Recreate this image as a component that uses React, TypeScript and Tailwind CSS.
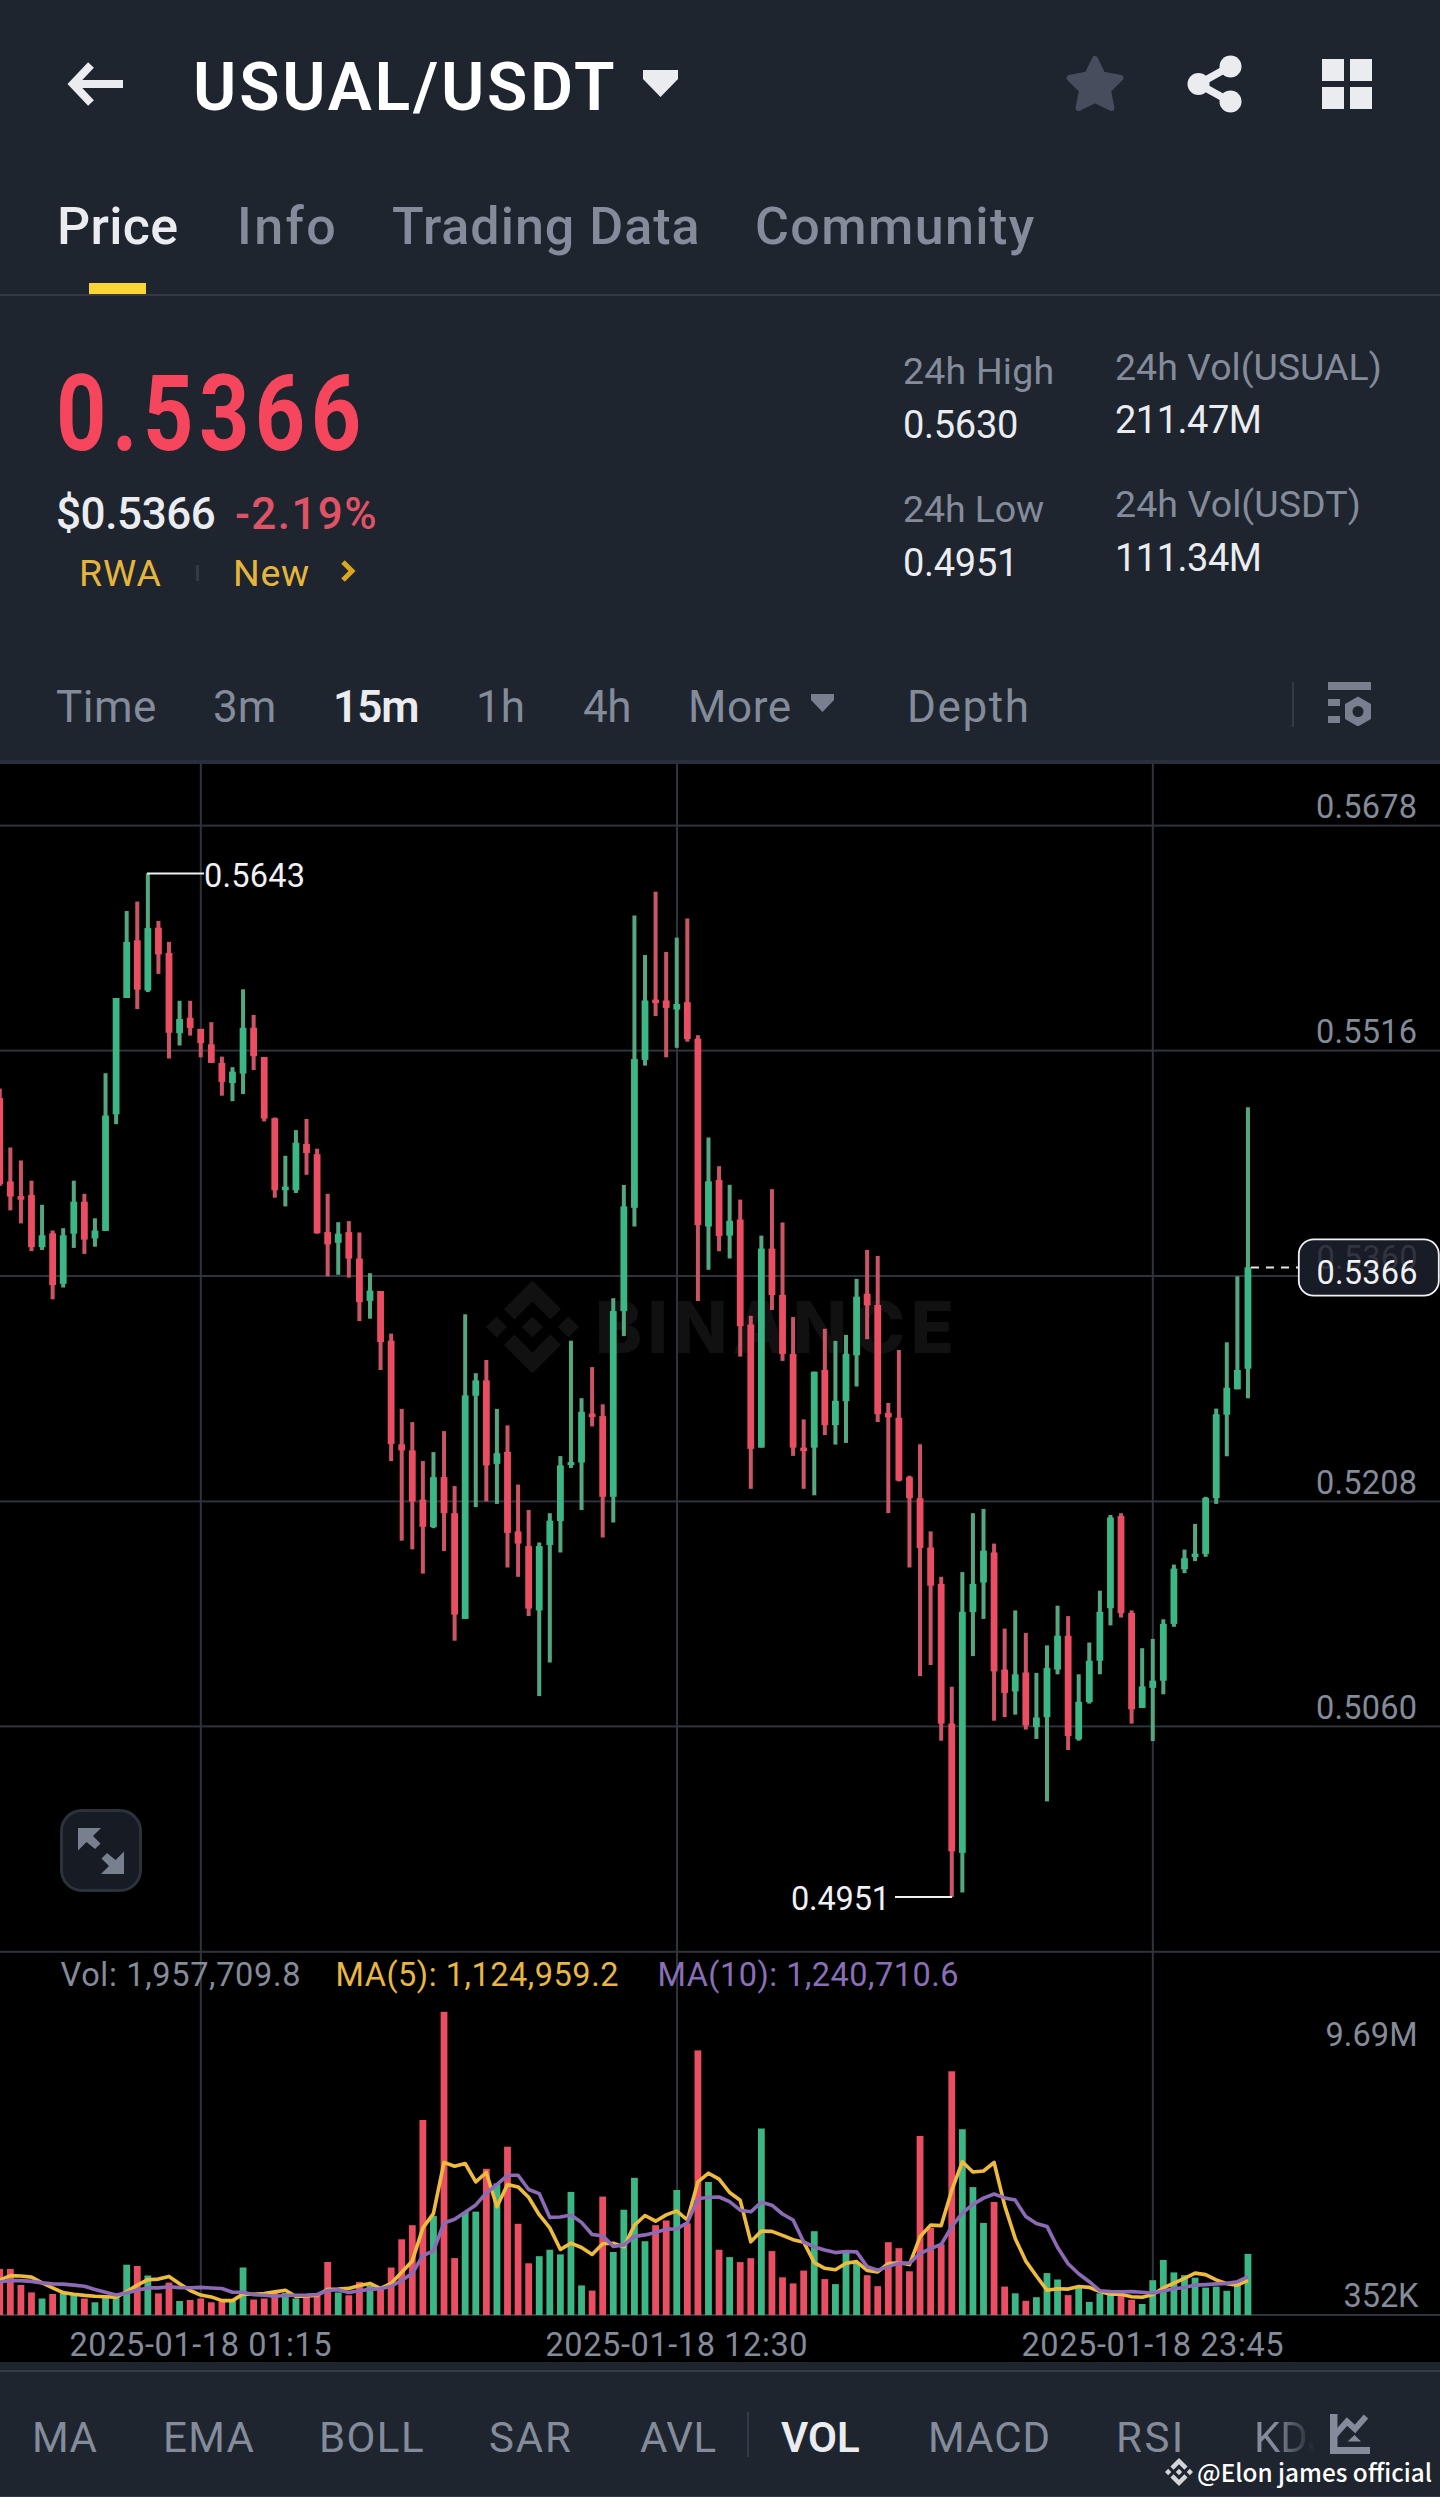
import { SiBinance } from 'react-icons/si';

const GREEN = '#3cb685';
const RED = '#ea4e63';
const GREEN_WICK = '#55a780';
const RED_WICK = '#cb5564';
const GRID = '#2e333c';
const LABEL = '#848b99';

// direction, wick top, body top, body bottom, wick bottom, volume bar height
type Candle = ['u' | 'd', number, number, number, number, number];

const candles: Candle[] = [
  ['d', 1088.6, 1098.1, 1184.3, 1185.9, 46],
  ['d', 1147.5, 1181.5, 1196.5, 1210.4, 46],
  ['d', 1160.5, 1196.1, 1199.7, 1223.4, 30],
  ['d', 1180.7, 1195, 1247.1, 1251.1, 22.6],
  ['u', 1204.8, 1235.3, 1247.1, 1249.9, 16.5],
  ['d', 1230.5, 1233.3, 1285.1, 1299.3, 21],
  ['u', 1228.2, 1235.3, 1283.9, 1287.5, 22],
  ['u', 1180.7, 1201.7, 1233.7, 1247.9, 22],
  ['d', 1193.8, 1201.7, 1239.6, 1253.9, 16.5],
  ['u', 1218.3, 1230.5, 1238.4, 1246.7, 12.7],
  ['u', 1073.2, 1115.5, 1230.9, 1230.9, 18.3],
  ['u', 998, 998, 1114.3, 1124.2, 19.3],
  ['u', 911, 941.9, 998, 998, 50.3],
  ['d', 901.6, 940.3, 989.7, 1009.1, 49],
  ['u', 873.5, 928.1, 990.5, 992.1, 39.5],
  ['d', 920.9, 927.7, 954.5, 973.9, 21.6],
  ['d', 941.9, 953, 1032.8, 1058.5, 32.4],
  ['u', 1000.8, 1019, 1033.2, 1045.5, 14],
  ['d', 1000.8, 1017.8, 1028.1, 1035.6, 15],
  ['d', 1028.9, 1028.9, 1043.1, 1057.3, 16.5],
  ['d', 1022.2, 1044.3, 1062.9, 1062.9, 12.7],
  ['d', 1056.6, 1062.9, 1081.9, 1095.7, 13.6],
  ['u', 1067.2, 1071.6, 1083, 1101.2, 14],
  ['u', 989.3, 1027.7, 1073.6, 1094.1, 47.5],
  ['d', 1015, 1027.7, 1056.2, 1070, 15.5],
  ['d', 1057, 1057, 1118.6, 1121.4, 16.5],
  ['d', 1117.5, 1118.2, 1190.2, 1197.7, 22],
  ['u', 1155.8, 1186.6, 1190.2, 1206.4, 22],
  ['u', 1130.1, 1142.8, 1190.2, 1193, 16.5],
  ['d', 1119, 1143.9, 1153, 1174.8, 18.3],
  ['d', 1148.7, 1154.2, 1233.3, 1233.7, 19.3],
  ['d', 1193.8, 1232.1, 1244.4, 1276.4, 53],
  ['u', 1222.2, 1233.7, 1242.8, 1274.8, 22.6],
  ['d', 1221.1, 1232.1, 1258.6, 1277.6, 19.7],
  ['d', 1232.5, 1258.6, 1302.1, 1321.1, 33],
  ['u', 1273.2, 1290.6, 1300.9, 1318.7, 29.6],
  ['d', 1291, 1291, 1342.1, 1370, 27.7],
  ['d', 1333.6, 1340.7, 1443.9, 1461.1, 47.5],
  ['d', 1408.9, 1444.3, 1450.4, 1540.7, 75.7],
  ['d', 1422.1, 1450.4, 1501.4, 1549.3, 89.8],
  ['d', 1461.1, 1499.6, 1526.8, 1573.6, 195],
  ['u', 1452.1, 1477.1, 1527.1, 1528.2, 99.2],
  ['d', 1431.1, 1477.1, 1513.2, 1551.1, 303.2],
  ['d', 1486.1, 1513.2, 1614.6, 1640.7, 56.9],
  ['u', 1314.3, 1395.4, 1618.9, 1618.9, 103],
  ['u', 1373.2, 1380.4, 1395.7, 1507.1, 103.4],
  ['d', 1360, 1380.4, 1465.4, 1501.4, 146.2],
  ['u', 1408.9, 1453.2, 1463.9, 1503.9, 131.6],
  ['d', 1425.4, 1451.8, 1532.9, 1567.5, 168.3],
  ['d', 1484.6, 1531.4, 1543.6, 1576.8, 91.2],
  ['d', 1510, 1546.1, 1608.6, 1616.1, 51.7],
  ['u', 1542.5, 1546.1, 1610.4, 1696.1, 58.8],
  ['u', 1513.2, 1520.7, 1545, 1662.5, 65.3],
  ['u', 1456.1, 1465.4, 1521.1, 1552.5, 60.6],
  ['u', 1340.7, 1462.1, 1465, 1467.9, 123.1],
  ['u', 1398.2, 1411.8, 1462.5, 1510, 29.6],
  ['d', 1367.1, 1413.6, 1417.1, 1426.4, 24.4],
  ['d', 1404.3, 1416.1, 1496.8, 1537.5, 118.4],
  ['u', 1298.2, 1311.1, 1496.8, 1522.5, 63],
  ['u', 1185, 1206.4, 1311.1, 1336.1, 105.3],
  ['u', 915.5, 1059.1, 1207.8, 1226.5, 137.2],
  ['u', 955, 1000.5, 1059.9, 1065.6, 73.8],
  ['d', 891.7, 999.6, 1003.1, 1016.1, 89.8],
  ['d', 951.9, 1000.5, 1007.9, 1057.3, 94.5],
  ['u', 937.6, 1004, 1009.6, 1047.8, 125],
  ['d', 918.5, 1002.2, 1039.1, 1041.7, 91.7],
  ['d', 1035.2, 1038.7, 1225.1, 1301, 264.6],
  ['u', 1137.5, 1181.3, 1226.5, 1269.8, 133],
  ['d', 1166.2, 1180, 1236, 1251.2, 65.3],
  ['u', 1184.8, 1220.8, 1235.6, 1258.5, 57.9],
  ['d', 1199.6, 1219.5, 1326.2, 1356.6, 52.9],
  ['d', 1315.8, 1324.5, 1448.9, 1488.8, 56.8],
  ['u', 1235.6, 1248.6, 1447.6, 1447.6, 186.5],
  ['d', 1189.2, 1248.6, 1295, 1310.1, 63.9],
  ['d', 1222.5, 1295, 1353.9, 1360.9, 37.7],
  ['d', 1317.1, 1353.9, 1447.6, 1455.9, 31.6],
  ['d', 1419.4, 1447.6, 1451.1, 1488.8, 44.4],
  ['u', 1371.7, 1371.7, 1447.6, 1495.3, 83.8],
  ['d', 1328.8, 1370, 1425.1, 1435, 35.9],
  ['u', 1340.9, 1400.8, 1425.1, 1444.6, 30.9],
  ['u', 1334.9, 1353.9, 1401.2, 1442.9, 63.6],
  ['u', 1278.9, 1296.7, 1355.3, 1386.5, 52.6],
  ['d', 1249.9, 1293.7, 1305.4, 1339.2, 39.8],
  ['d', 1255.9, 1305, 1414.2, 1422, 28.8],
  ['d', 1403, 1412.9, 1417.3, 1513.1, 72.8],
  ['d', 1350, 1417.7, 1480.6, 1481.4, 66.8],
  ['d', 1475.7, 1477.1, 1498.2, 1567.5, 43.7],
  ['d', 1444.3, 1498.2, 1547.9, 1676.1, 179],
  ['d', 1531.4, 1547.5, 1585.7, 1665, 87],
  ['d', 1576.8, 1583.9, 1723.6, 1740.7, 70.7],
  ['d', 1686.8, 1723.6, 1851.4, 1897.1, 243.7],
  ['u', 1572.1, 1611.8, 1852.9, 1892.5, 185.8],
  ['u', 1513.2, 1583.9, 1612.1, 1656.1, 127.9],
  ['u', 1508.9, 1550.7, 1582.5, 1618.9, 92],
  ['d', 1543.6, 1552.5, 1671.4, 1720.7, 113],
  ['d', 1628.6, 1669.6, 1692.9, 1717.1, 28.4],
  ['u', 1610.4, 1674.3, 1691.4, 1714.6, 21.7],
  ['d', 1632.9, 1672.5, 1725.4, 1729.6, 14.2],
  ['u', 1672.9, 1717.5, 1727.1, 1738.9, 17.8],
  ['u', 1645.4, 1667.9, 1717.1, 1801.4, 41.9],
  ['u', 1605.7, 1635.7, 1669.6, 1674.3, 35.5],
  ['d', 1616.1, 1635.7, 1736.1, 1750, 19.9],
  ['u', 1674.3, 1701.8, 1739.3, 1740.7, 27.4],
  ['u', 1642.5, 1660.7, 1702.1, 1703.6, 13.1],
  ['u', 1590.7, 1611.8, 1660.7, 1674.3, 21.7],
  ['u', 1515, 1517.5, 1608.2, 1625.4, 21.7],
  ['d', 1513.2, 1516.1, 1613.2, 1617.5, 19.5],
  ['d', 1610.4, 1612.9, 1709.3, 1723.6, 15.3],
  ['u', 1648.2, 1686.4, 1707.9, 1707.9, 11],
  ['u', 1638.9, 1680.7, 1687.9, 1741.1, 34.8],
  ['u', 1619.3, 1623.9, 1680.7, 1694.3, 55.1],
  ['u', 1564.6, 1568.6, 1623.9, 1626.8, 42.6],
  ['u', 1549.6, 1558.2, 1569.3, 1573.2, 39.8],
  ['u', 1523.9, 1553.6, 1557.1, 1561.1, 37.3],
  ['u', 1496.8, 1497.9, 1553.9, 1556.8, 27.4],
  ['u', 1408.6, 1414.3, 1498.2, 1503.9, 28.4],
  ['u', 1342.3, 1387.7, 1414.7, 1456.3, 24.2],
  ['u', 1276.3, 1370, 1389.3, 1389.3, 32],
  ['u', 1107.3, 1267.3, 1368.7, 1398.3, 61.1],
];

// bars left of the visible range, needed by the moving averages
const hiddenVolumes = [31, 31, 31, 31, 31, 24, 32, 28, 45];
const volumes = [...hiddenVolumes, ...candles.map((c) => c[5])];

const BASE = 2315;
const xAt = (i: number) => -0.25 + 10.578 * i;

function maPoints(period: number) {
  return candles
    .map((_, i) => {
      const end = i + hiddenVolumes.length + 1;
      const avg = volumes.slice(end - period, end).reduce((a, b) => a + b, 0) / period;
      return `${xAt(i).toFixed(1)},${(BASE - avg).toFixed(1)}`;
    })
    .join(' ');
}

interface LabelProps {
  x: number;
  y: number;
  w: number;
  fill?: string;
  children: string;
}

function ChartLabel({ x, y, w, fill = LABEL, children }: LabelProps) {
  return (
    <text x={x} y={y} textLength={w} fill={fill} fontSize="32.5">
      {children}
    </text>
  );
}

function Chart() {
  return (
    <svg viewBox="0 760 1440 1602" className="block w-[1440px] h-[1602px] bg-black">
      <rect x="0" y="760" width="1440" height="4" fill="#2a303b" />

      {/* watermark */}
      <SiBinance x={486} y={1280.5} size={93} color="#111111" />
      <text x="595" y="1353" textLength="359" fontSize="71" className="font-['Inter'] font-extrabold" fill="#111111">
        BINANCE
      </text>

      {[825.6, 1050.6, 1276, 1501.4, 1726.4, 1951.8, 2315].map((y) => (
        <rect key={y} x="0" y={y - 1} width="1440" height="2" fill={GRID} />
      ))}
      {[200.8, 677, 1152.8].map((x) => (
        <rect key={x} x={x - 1} y="764" width="2" height="1551" fill={GRID} />
      ))}

      {candles.map(([dir, high, top, bottom, low, vol], i) => {
        const x = xAt(i);
        const up = dir === 'u';
        return (
          <g key={i}>
            <rect x={x - 2} y={high} width="4" height={low - high} fill={up ? GREEN_WICK : RED_WICK} />
            <rect x={x - 3.4} y={top} width="6.8" height={bottom - top} fill={up ? GREEN : RED} />
            <rect x={x - 3.4} y={BASE - vol} width="6.8" height={vol} fill={up ? GREEN : RED} />
          </g>
        );
      })}

      <polyline points={maPoints(5)} fill="none" stroke="#efbb3c" strokeWidth="3.6" strokeLinejoin="round" />
      <polyline points={maPoints(10)} fill="none" stroke="#8d6ab5" strokeWidth="3.6" strokeLinejoin="round" />

      {/* high / low marks */}
      <path d="M147 873.5H204M895 1897H952" stroke="#f0f1f4" strokeWidth="2" />
      <ChartLabel x={204} y={886.5} w={101} fill="#f0f1f4">0.5643</ChartLabel>
      <ChartLabel x={791} y={1909.5} w={99} fill="#f0f1f4">0.4951</ChartLabel>

      {/* price scale */}
      <ChartLabel x={1316} y={817.8} w={101}>0.5678</ChartLabel>
      <ChartLabel x={1316} y={1043} w={101}>0.5516</ChartLabel>
      <ChartLabel x={1316} y={1493.5} w={101}>0.5208</ChartLabel>
      <ChartLabel x={1316} y={1718.5} w={101}>0.5060</ChartLabel>
      <path d="M1251 1267.5H1298" stroke="#e3e5e9" strokeWidth="2" strokeDasharray="8 7" />
      <rect x="1298.8" y="1239.3" width="140" height="56.4" rx="15" fill="#181c27" stroke="#f0f1f4" strokeWidth="1.8" />
      <ChartLabel x={1316.5} y={1268.5} w={101} fill="#30353f">0.5360</ChartLabel>
      <ChartLabel x={1316.5} y={1283.6} w={101} fill="#f0f1f4">0.5366</ChartLabel>

      {/* volume legend and scale */}
      <ChartLabel x={60.500} y={1986} w={240}>Vol: 1,957,709.8</ChartLabel>
      <ChartLabel x={335.500} y={1986} w={283} fill="#e9b741">MA(5): 1,124,959.2</ChartLabel>
      <ChartLabel x={657.500} y={1986} w={301} fill="#8a6fb8">MA(10): 1,240,710.6</ChartLabel>
      <ChartLabel x={1325.500} y={2045.5} w={92}>9.69M</ChartLabel>
      <ChartLabel x={1343.500} y={2306.5} w={75}>352K</ChartLabel>

      {/* time scale */}
      <ChartLabel x={69.500} y={2356} w={262}>2025-01-18 01:15</ChartLabel>
      <ChartLabel x={545.500} y={2356} w={262}>2025-01-18 12:30</ChartLabel>
      <ChartLabel x={1021.500} y={2356} w={262}>2025-01-18 23:45</ChartLabel>
    </svg>
  );
}

function Header() {
  return (
    <header className="flex items-center h-[167px] pl-[67px] pr-[68px]">
      <svg width="56" height="44" viewBox="0 0 56 44" fill="none" stroke="#eaecef" strokeWidth="8">
        <path d="M56 22H6M24 3L6 22L24 41" />
      </svg>
      <h1 className="pt-2 ml-[70px] text-[66px] leading-none font-semibold tracking-[2.8px] text-white">USUAL/USDT</h1>
      <svg className="ml-[26px]" width="35" height="27" viewBox="0 0 35 27" fill="#eaecef">
        <path d="M0 0H35V9L17.5 27L0 9Z" />
      </svg>
      <div className="flex items-center ml-auto">
        <svg width="58" height="57" viewBox="0 0 58 57" fill="#474d5c" stroke="#474d5c" strokeWidth="6" strokeLinejoin="round">
          <path d="M29 4L36.5 19.5L54.5 23L42 35.5L45.5 53L29 45L12.5 53L16 35.5L3.5 23L21.5 19.5Z" />
        </svg>
        <svg className="ml-[63px]" width="56" height="58" viewBox="0 0 56 58" fill="#eaecef">
          <path d="M43 11.5L11.5 29L43 46.5" fill="none" stroke="#eaecef" strokeWidth="7.5" />
          <circle cx="43.5" cy="11.5" r="11" />
          <circle cx="11.5" cy="29" r="11" />
          <circle cx="43.5" cy="46.5" r="11" />
        </svg>
        <div className="grid grid-cols-2 gap-x-[6px] gap-y-[6px] ml-[79px]">
          <span className="w-[22px] h-[22px] bg-[#eaecef]" />
          <span className="w-[22px] h-[22px] bg-[#eaecef]" />
          <span className="w-[22px] h-[22px] bg-[#eaecef]" />
          <span className="w-[22px] h-[22px] bg-[#eaecef]" />
        </div>
      </div>
    </header>
  );
}

function Tabs() {
  return (
    <nav className="flex h-[129px] pl-[57px] border-b-2 border-[#333a46] text-[52px] leading-[120px] font-medium text-[#848b9a] whitespace-nowrap">
      <div className="relative w-[180px] tracking-[0.3px] text-[#eaecef]">
        Price
        <span className="absolute left-[32px] bottom-0 w-[57px] h-[11px] bg-[#fcd535]" />
      </div>
      <div className="w-[155px] tracking-[2.4px]">Info</div>
      <div className="w-[363px] tracking-[1px]">Trading Data</div>
      <div className="tracking-[1.4px]">Community</div>
    </nav>
  );
}

function Summary() {
  return (
    <section className="flex h-[358px] pl-[56px] whitespace-nowrap">
      <div className="w-[847px] pt-[74px]">
        <div className="origin-left scale-x-[0.83] text-[106px] leading-[88px] font-bold tracking-[6.6px] text-[#f6465d]">
          0.5366
        </div>
        <div className="flex mt-[28px] text-[44px] leading-[56px] font-medium">
          <span className="w-[179px] tracking-[-0.4px] text-[#eaecef]">$0.5366</span>
          <span className="tracking-[1.4px] text-[#e05265]">-2.19%</span>
        </div>
        <div className="flex items-center mt-[11px] pl-[23px] text-[37.5px] leading-[40px] text-[#e5b53d]">
          <span className="w-[117px] tracking-[1px]">RWA</span>
          <span className="w-[3px] h-[16px] bg-[#333a46]" />
          <span className="w-[107px] ml-[34px] tracking-[0.7px]">New</span>
          <svg className="mt-[-4px]" width="16" height="22" viewBox="0 0 16 22" fill="none" stroke="#dba51f" strokeWidth="5">
            <path d="M3 2L12 11L3 20" />
          </svg>
        </div>
      </div>
      <dl className="w-[212px] pt-[50px] text-[37.5px] leading-[50px] text-[#848b9a]">
        <dt className="tracking-[0.2px]">24h High</dt>
        <dd className="mt-[4px] text-[38px] tracking-[-0.3px] text-[#eaecef]">0.5630</dd>
        <dt className="mt-[34px] tracking-[-0.1px]">24h Low</dt>
        <dd className="mt-[4px] text-[38px] tracking-[-0.3px] text-[#eaecef]">0.4951</dd>
      </dl>
      <dl className="pt-[46px] text-[37.5px] leading-[50px] text-[#848b9a]">
        <dt>24h Vol(USUAL)</dt>
        <dd className="mt-[3px] text-[38px] tracking-[-0.5px] text-[#eaecef]">211.47M</dd>
        <dt className="mt-[34px] tracking-[0.1px]">24h Vol(USDT)</dt>
        <dd className="mt-[4px] text-[38px] tracking-[-0.5px] text-[#eaecef]">111.34M</dd>
      </dl>
    </section>
  );
}

function Intervals() {
  return (
    <div className="flex items-center h-[106px] pl-[56px] pr-[69px] text-[44px] leading-none text-[#848b9a] whitespace-nowrap">
      <span className="w-[157px] tracking-[0.5px]">Time</span>
      <span className="w-[120px]">3m</span>
      <span className="w-[143px] font-semibold tracking-[-1px] text-[#eaecef]">15m</span>
      <span className="w-[107px]">1h</span>
      <span className="w-[105px] tracking-[-0.5px]">4h</span>
      <span className="flex w-[219px] tracking-[0.6px]">
        <span className="w-[123px]">More</span>
        <svg className="mt-[9px]" width="23" height="18" viewBox="0 0 23 18" fill="#787f8e">
          <path d="M0 0H23V6L11.5 18L0 6Z" />
        </svg>
      </span>
      <span className="tracking-[1.6px]">Depth</span>
      <span className="ml-auto w-[2px] h-[45px] mt-[-6px] bg-[#333a46]" />
      <svg className="ml-[34px] mt-[-6px]" width="43" height="44" viewBox="0 0 43 44" fill="#787f8e">
        <path d="M0 0H43V8H0ZM0 17H12V24H0ZM0 34H12V41H0Z" />
        <path fillRule="evenodd" d="M30 14.5L43 22V37L30 44.5L17 37V22ZM30 24A5.5 5.5 0 1 0 30 35A5.5 5.5 0 1 0 30 24Z" />
      </svg>
    </div>
  );
}

function Indicators() {
  return (
    <footer className="relative h-[135px] pt-[8px] border-b border-[#333a46]">
      <div className="flex items-center h-[126px] pl-[32px] pt-[8px] border-t-2 border-[#333a46] text-[42px] leading-[60px] text-[#848b9a] whitespace-nowrap">
        <span className="w-[131px] tracking-[0.5px]">MA</span>
        <span className="w-[156px] tracking-[1.3px]">EMA</span>
        <span className="w-[170px] tracking-[1.4px]">BOLL</span>
        <span className="w-[151px] tracking-[1.8px]">SAR</span>
        <span className="w-[107px] tracking-[0.6px]">AVL</span>
        <span className="w-[2px] h-[45px] mt-[-8px] bg-[#333a46]" />
        <span className="w-[147px] ml-[32px] font-semibold text-[#eaecef]">VOL</span>
        <span className="w-[188px] tracking-[1px]">MACD</span>
        <span className="w-[138px] tracking-[2.5px]">RSI</span>
        <span className="w-[76px] overflow-hidden text-transparent bg-clip-text bg-linear-to-r from-[#848b9a] from-28% to-[#1e252f] to-80%">
          KDJ
        </span>
        <svg className="mt-[-8px]" width="41" height="41" viewBox="0 0 41 41" fill="#848b9a">
          <path d="M0 0H7.500V33H40V40H0Z" />
          <path d="M5 21L17 7.500L25 15L36 2.500" fill="none" stroke="#848b9a" strokeWidth="6" />
          <path d="M24.500 21L31 27.500H17.500Z" />
        </svg>
      </div>
      <div className="absolute right-[8px] bottom-[6px] flex items-center gap-[4px] text-white">
        <SiBinance size={28} color="#d4d5d7" />
        <span className="font-['Noto_Sans_CJK_SC','Noto_Sans',sans-serif] text-[24.3px] leading-[36px] font-medium">
          @Elon james official
        </span>
      </div>
    </footer>
  );
}

export default function App() {
  return (
    <div className="w-[1440px] h-[2497px] overflow-hidden bg-[#1e252f] font-['Roboto','Liberation_Sans',sans-serif]">
      <Header />
      <Tabs />
      <Summary />
      <Intervals />
      <div className="relative">
        <Chart />
        <button className="absolute left-[60px] top-[1049px] w-[82px] h-[83px] rounded-[22px] border-[3px] border-[#2b323c] bg-[#161b24] flex items-center justify-center">
          <svg width="46" height="46" viewBox="0 0 46 46" fill="#787f8e">
            <path d="M0 0H23L15 8L22.500 15.500L17 21L8.500 14L0 22.500Z" />
            <path d="M46 46H23L31 38L23.500 30.500L29 25L37.500 32L46 23.500Z" />
          </svg>
        </button>
      </div>
      <Indicators />
    </div>
  );
}
